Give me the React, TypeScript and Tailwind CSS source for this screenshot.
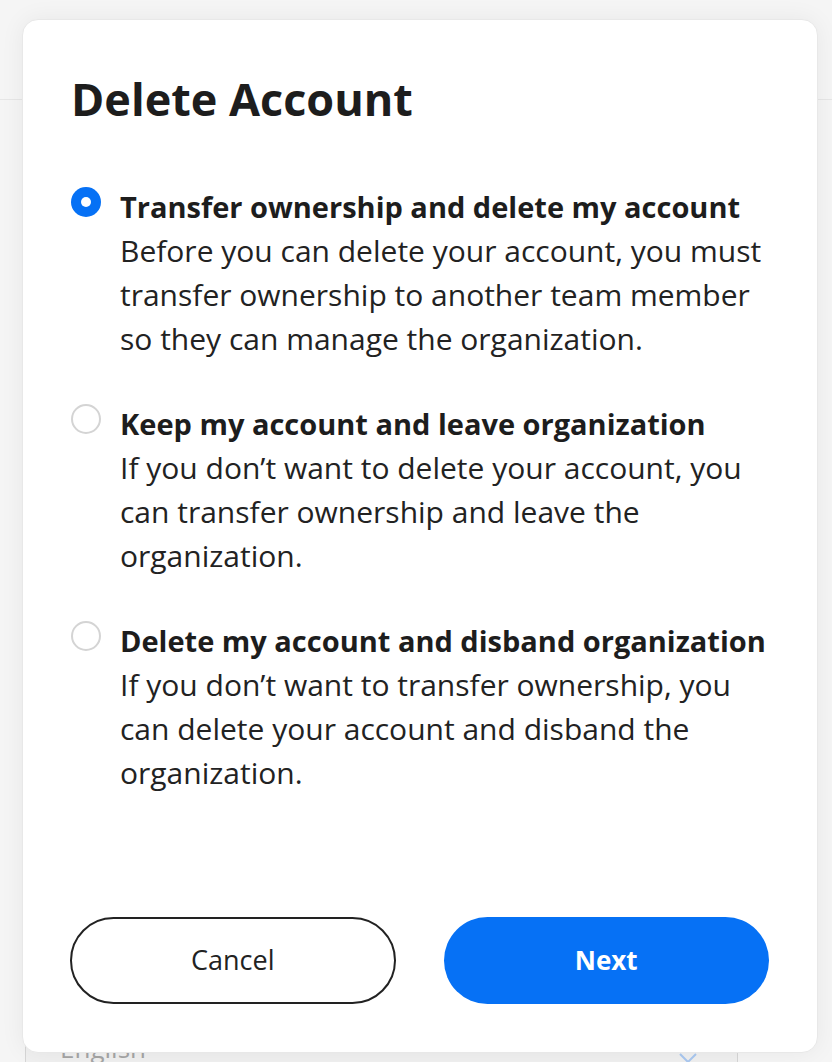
import { useState } from "react";

const options = [
  {
    id: "transfer",
    title: "Transfer ownership and delete my account",
    body: "Before you can delete your account, you must transfer ownership to another team member so they can manage the organization.",
  },
  {
    id: "leave",
    title: "Keep my account and leave organization",
    body: "If you don\u2019t want to delete your account, you can transfer ownership and leave the organization.",
  },
  {
    id: "disband",
    title: "Delete my account and disband organization",
    body: "If you don\u2019t want to transfer ownership, you can delete your account and disband the organization.",
  },
];

export default function App() {
  const [selected, setSelected] = useState("transfer");

  return (
    <div
      className="relative w-[832px] h-[1062px] overflow-hidden bg-[#f5f5f5] text-[#1d1d1d]"
      style={{ fontFamily: '"Open Sans", "Liberation Sans", sans-serif' }}
    >
      {/* page behind the dialog */}
      <div className="h-[100px] border-b border-[#e6e6e6]" />
      <div className="pt-[918px] pl-[25px]">
        <div className="w-[713px] h-[60px] border border-[#d6d6d6] bg-[#f0f0f0] flex items-center justify-between pl-[34px] pr-[40px]">
          <span className="text-[26px] text-[#a5a5a5]">English</span>
          <svg width="18" height="10" viewBox="0 0 18 10" className="mt-[20px]">
            <path d="M1 1l8 8 8-8" fill="none" stroke="#a9c8f0" strokeWidth="2" />
          </svg>
        </div>
      </div>

      {/* dialog */}
      <div className="absolute left-[22px] top-[19px] w-[796px] h-[1034px] bg-white rounded-[16px] border border-[#e8e8e8] shadow-[0_0_24px_rgba(0,0,0,0.06)] flex flex-col px-[48px] pt-[53px] pb-[48px]">
        <h1 className="text-[45px] leading-[52px] font-bold">Delete Account</h1>

        <div className="mt-[60px] flex flex-col gap-[41px]">
          {options.map((o) => {
            const on = selected === o.id;
            return (
              <label key={o.id} className="flex items-start cursor-pointer" onClick={() => setSelected(o.id)}>
                <span
                  className={
                    on
                      ? "mt-[2px] w-[30px] h-[30px] shrink-0 rounded-full bg-[#0671f5] flex items-center justify-center"
                      : "mt-[2px] w-[30px] h-[30px] shrink-0 rounded-full border-2 border-[#d4d4d4] bg-white"
                  }
                >
                  {on && <span className="w-[10px] h-[10px] rounded-full bg-white" />}
                </span>
                <span className="ml-[19px] flex flex-col">
                  <span className="text-[29px] leading-[44px] font-bold">{o.title}</span>
                  <span className="text-[30px] leading-[44px] text-[#222]">{o.body}</span>
                </span>
              </label>
            );
          })}
        </div>

        <div className="flex-1" />

        <div className="flex gap-[48px] -ml-px">
          <button className="w-[326px] h-[87px] rounded-full border-2 border-[#222] bg-white text-[27px] text-[#222]">
            Cancel
          </button>
          <button className="w-[326px] h-[87px] rounded-full bg-[#0671f5] text-[26px] font-bold text-white">
            Next
          </button>
        </div>
      </div>
    </div>
  );
}
